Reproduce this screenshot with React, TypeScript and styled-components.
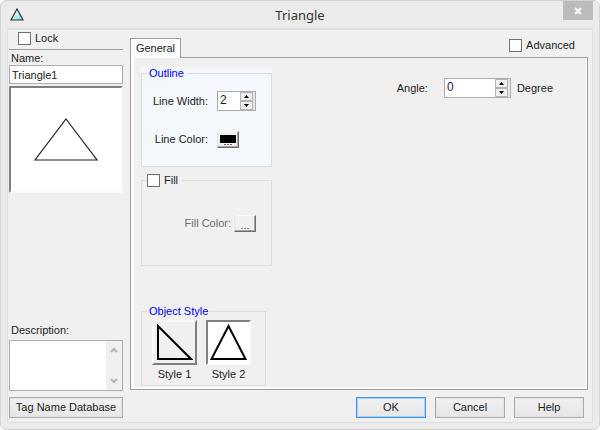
import React, { useState } from 'react';
import styled, { createGlobalStyle, css } from 'styled-components';

const GlobalStyle = createGlobalStyle`
  *, *::before, *::after { box-sizing: border-box; }
  body {
    margin: 0;
    background: #ffffff;
    color: #1c1c1c;
    font: 11px/13px "Liberation Sans", Arial, sans-serif;
  }
  button, input, textarea { font: inherit; color: inherit; margin: 0; }
`;

const Window = styled.div`
  display: flex;
  flex-direction: column;
  min-height: 100vh;
  padding: 0 6px 6px;
  background: #ebebeb;
  border: 1px solid #d4d4d4;
  border-radius: 6px;
`;

const TitleBar = styled.header`
  display: grid;
  grid-template-columns: 30px 1fr 30px;
  align-items: center;
  height: 27px;
`;

const Title = styled.h1`
  margin: 0;
  padding-top: 1px;
  text-align: center;
  font: 13px/18px "Noto Sans", "Open Sans", sans-serif;
  color: #333333;
`;

const CloseButton = styled.button`
  display: flex;
  align-items: center;
  justify-content: center;
  align-self: start;
  height: 19px;
  padding: 0;
  border: 0;
  background: #bcbcbc;
`;

const TitleIcon = styled.svg`
  display: block;
  margin-left: 3px;
`;

const Body = styled.main`
  display: flex;
  flex: 1;
  gap: 7px;
  padding: 2px 4px 4px 1px;
  background: #f0f0f0;
  border: 1px solid #dedede;
  border-top-width: 2px;
`;

const Sidebar = styled.section`
  display: flex;
  flex-direction: column;
  width: 114px;
  flex: none;
`;

const CheckLabel = styled.label`
  display: flex;
  align-items: center;
  gap: 4px;
  white-space: nowrap;
`;

const LockRow = styled.div`
  height: 18px;
  padding-left: 9px;
  border-bottom: 1px solid #a0a0a0;
`;

const CheckBox = styled.input.attrs({ type: 'checkbox' })`
  appearance: none;
  flex: none;
  width: 13px;
  height: 13px;
  border: 1px solid #707070;
  background: #ffffff;
  &:checked { box-shadow: inset 0 0 0 3px #ffffff; background: #202020; }
`;

const FieldLabel = styled.label`
  padding: 2px 0 0 2px;
`;

const TextInput = styled.input`
  width: 100%;
  height: 19px;
  padding: 0 2px;
  border: 1px solid #abadb3;
  background: #ffffff;
`;

const Preview = styled.div`
  display: flex;
  align-items: center;
  justify-content: center;
  height: 107px;
  margin-top: 2px;
  border: 2px solid;
  border-color: #808080 #f8f8f8 #f8f8f8 #808080;
  background: #ffffff;
`;

const Description = styled.div`
  display: flex;
  flex-direction: column;
  gap: 3px;
  margin-top: auto;
`;

const MemoBox = styled.div`
  display: flex;
  height: 51px;
  border: 1px solid #abadb3;
  background: #ffffff;
`;

const Memo = styled.textarea`
  flex: 1;
  min-width: 0;
  padding: 2px;
  border: 0;
  resize: none;
  overflow: hidden;
  background: transparent;
  outline: none;
`;

const ScrollBar = styled.div`
  display: flex;
  flex-direction: column;
  justify-content: space-between;
  width: 16px;
  padding: 1px 0;
  background: #f0f0f0;
`;

const ScrollButton = styled.button`
  display: flex;
  align-items: center;
  justify-content: center;
  height: 16px;
  padding: 0;
  border: 0;
  background: transparent;
`;

const PushButton = styled.button<{ $primary?: boolean }>`
  width: 70px;
  height: 21px;
  padding: 0;
  white-space: nowrap;
  border: 1px solid ${(p) => (p.$primary ? '#3c94ee' : '#acacac')};
  box-shadow: inset 0 0 0 1px ${(p) => (p.$primary ? '#a9d2fa' : '#e2e2e2')};
  background: linear-gradient(#f1f1f1, #e6e6e6);
`;

const DatabaseButton = styled(PushButton)`
  width: 100%;
  margin-top: 6px;
`;

const Content = styled.section`
  display: flex;
  flex-direction: column;
  flex: 1;
  min-width: 0;
`;

const TabHeader = styled.div`
  display: flex;
  align-items: flex-start;
  justify-content: space-between;
  height: 25px;
  padding: 6px 13px 0 0;
`;

const Tab = styled.button`
  position: relative;
  height: 20px;
  width: 51px;
  padding: 0;
  border: 1px solid #a0a0a0;
  border-bottom: 0;
  background: #fcfcfc;
`;

const HeaderCheck = styled(CheckLabel)`
  padding-top: 1px;
`;

const TabPanel = styled.div`
  display: flex;
  flex: 1;
  justify-content: space-between;
  padding: 9px 34px 3px 10px;
  border: 1px solid #a0a0a0;
  box-shadow: inset 3px 0 0 #fdfdfd, inset -1px -2px 0 #fdfdfd;
`;

const GroupColumn = styled.div`
  display: flex;
  flex-direction: column;
  gap: 7px;
  width: 131px;
`;

const Group = styled.div<{ $tinted?: boolean; $last?: boolean }>`
  display: grid;
  ${(p) => p.$tinted && css`background: #f4f7fc;`}
  ${(p) => p.$last && css`width: 125px; margin-top: auto;`}
`;

const FieldSet = styled.fieldset`
  min-width: 0;
  margin: 0;
  padding: 0;
  border: 1px solid #dcdcdc;
`;

const Legend = styled.legend<{ $plain?: boolean }>`
  margin-left: 5px;
  padding: 0 ${(p) => (p.$plain ? 4 : 2)}px;
  padding-left: ${(p) => (p.$plain ? 0 : 2)}px;
  color: ${(p) => (p.$plain ? 'inherit' : '#0000ff')};
`;

const OutlineFields = styled.div`
  display: grid;
  grid-template-columns: 66px auto;
  grid-auto-rows: 20px;
  justify-content: start;
  align-items: center;
  row-gap: 18px;
  column-gap: 9px;
  padding: 11px 0 17px;
  label { justify-self: end; white-space: nowrap; }
`;

const FillFields = styled.div`
  display: flex;
  align-items: center;
  gap: 3px;
  justify-content: flex-end;
  padding: 28px 15px 33px 0;
  color: #6d6d6d;
`;

const SpinBox = styled.div<{ $wide?: boolean }>`
  display: flex;
  width: ${(p) => (p.$wide ? 67 : 39)}px;
  height: 20px;
  border: 1px solid #abadb3;
  background: #ffffff;
`;

const SpinInput = styled.input.attrs({ type: 'number' })`
  appearance: textfield;
  flex: 1;
  min-width: 0;
  padding: 0 0 1px 2px;
  border: 0;
  outline: none;
  background: transparent;
  font-size: 12px;
  &::-webkit-inner-spin-button { display: none; }
`;

const SpinButtons = styled.div`
  display: grid;
  grid-template-rows: 1fr 1fr;
  width: 15px;
  padding: 0 2px 0 0;
  background: #e4e4e4;
`;

const SpinButton = styled.button`
  display: flex;
  align-items: center;
  justify-content: center;
  padding: 0;
  border: 1px solid #b4b4b4;
  background: #eeeeee;
`;

const ColorButton = styled.button`
  display: flex;
  flex-direction: column;
  align-items: center;
  justify-content: flex-end;
  gap: 1px;
  width: 22px;
  height: 17px;
  padding: 0 1px 2px;
  border: 1px solid;
  border-color: #fafafa #6c6c6c #6c6c6c #e4e4e4;
  box-shadow: inset -1px -1px 0 #a6a6a6;
  background: #f0f0f0;
`;

const Swatch = styled.span`
  width: 16px;
  height: 8px;
  background: #000000;
`;

const StyleList = styled.div`
  display: flex;
  gap: 9px;
  padding: 2px 0 4px 10px;
`;

const StyleItem = styled.label`
  display: grid;
  justify-items: center;
  gap: 3px;
`;

const StyleButton = styled.button<{ $active: boolean }>`
  display: flex;
  align-items: center;
  justify-content: center;
  width: 45px;
  height: 45px;
  padding: 0;
  border: 2px solid;
  border-color: ${(p) => (p.$active ? '#808080 #fafafa #fafafa #808080' : '#fafafa #808080 #808080 #fafafa')};
  background: ${(p) => (p.$active ? '#ffffff' : '#f0f0f0')};
`;

const AngleRow = styled.div`
  display: flex;
  align-items: center;
  align-self: flex-start;
  padding-top: 11px;
  white-space: nowrap;
`;

const AngleLabel = styled.label`
  padding-right: 16px;
`;

const AngleUnit = styled.span`
  padding-left: 6px;
`;

const Footer = styled.footer`
  display: flex;
  justify-content: flex-end;
  gap: 9px;
  padding: 7px 4px 0 0;
`;

const Arrow = ({ up }: { up?: boolean }) => (
  <svg width="5" height="3" viewBox="0 0 5 3" aria-hidden="true">
    <path d={up ? 'M0 3 2.500 0 5 3Z' : 'M0 0h5L2.500 3Z'} fill="#000" />
  </svg>
);

const Chevron = ({ up }: { up?: boolean }) => (
  <svg width="8" height="6" viewBox="0 0 8 6" aria-hidden="true">
    <path d={up ? 'M1 5 4 2l3 3' : 'M1 1l3 3 3-3'} fill="none" stroke="#b4b4b4" strokeWidth="2" />
  </svg>
);

const Dots = ({ color }: { color: string }) => (
  <svg width="8" height="1" viewBox="0 0 8 1" aria-hidden="true">
    <path d="M0 0h2v1H0zM3 0h2v1H3zM6 0h2v1H6z" fill={color} />
  </svg>
);

type SpinnerProps = {
  id: string;
  value: number;
  wide?: boolean;
  onChange: (value: number) => void;
};

const Spinner = ({ id, value, wide, onChange }: SpinnerProps) => (
  <SpinBox $wide={wide}>
    <SpinInput id={id} value={value} onChange={(e) => onChange(Number(e.target.value))} />
    <SpinButtons>
      <SpinButton type="button" aria-label="Increase" onClick={() => onChange(value + 1)}>
        <Arrow up />
      </SpinButton>
      <SpinButton type="button" aria-label="Decrease" onClick={() => onChange(value - 1)}>
        <Arrow />
      </SpinButton>
    </SpinButtons>
  </SpinBox>
);

export default function App() {
  const [name, setName] = useState('Triangle1');
  const [lineWidth, setLineWidth] = useState(2);
  const [angle, setAngle] = useState(0);
  const [shape, setShape] = useState(2);
  const [fill, setFill] = useState(false);

  return (
    <>
      <GlobalStyle />
      <Window>
        <TitleBar>
          <TitleIcon width="14" height="13" viewBox="0 0 14 13" aria-hidden="true">
            <defs>
              <linearGradient id="glass" x1="0" y1="0" x2="1" y2="1">
                <stop offset="0.300" stopColor="#e2fbfa" />
                <stop offset="1" stopColor="#6fdcd8" />
              </linearGradient>
            </defs>
            <path d="M7 1 13 12H1Z" fill="url(#glass)" stroke="#333" strokeWidth="1.200" />
          </TitleIcon>
          <Title>Triangle</Title>
          <CloseButton type="button" aria-label="Close">
            <svg width="8" height="8" viewBox="0 0 8 8" aria-hidden="true">
              <path d="M1 1l6 6M7 1 1 7" stroke="#fff" strokeWidth="1.800" />
            </svg>
          </CloseButton>
        </TitleBar>

        <Body>
          <Sidebar>
            <LockRow>
              <CheckLabel>
                <CheckBox />
                Lock
              </CheckLabel>
            </LockRow>
            <FieldLabel htmlFor="name">Name:</FieldLabel>
            <TextInput id="name" value={name} onChange={(e) => setName(e.target.value)} />
            <Preview>
              <svg width="64" height="43" viewBox="0 0 64 43" role="img" aria-label="Preview">
                <path d="M32 1 63 42H1Z" fill="none" stroke="#202020" strokeWidth="1.200" />
              </svg>
            </Preview>
            <Description>
              <FieldLabel htmlFor="description">Description:</FieldLabel>
              <MemoBox>
                <Memo id="description" />
                <ScrollBar>
                  <ScrollButton type="button" aria-label="Scroll up"><Chevron up /></ScrollButton>
                  <ScrollButton type="button" aria-label="Scroll down"><Chevron /></ScrollButton>
                </ScrollBar>
              </MemoBox>
            </Description>
            <DatabaseButton type="button">Tag Name Database</DatabaseButton>
          </Sidebar>

          <Content>
            <TabHeader>
              <Tab type="button" role="tab" aria-selected="true">General</Tab>
              <HeaderCheck>
                <CheckBox />
                Advanced
              </HeaderCheck>
            </TabHeader>
            <TabPanel role="tabpanel" aria-label="General">
              <GroupColumn>
                <Group $tinted>
                  <FieldSet>
                    <Legend>Outline</Legend>
                    <OutlineFields>
                      <label htmlFor="line-width">Line Width:</label>
                      <Spinner id="line-width" value={lineWidth} onChange={setLineWidth} />
                      <label htmlFor="line-color">Line Color:</label>
                      <ColorButton id="line-color" type="button">
                        <Swatch />
                        <Dots color="#7d5560" />
                      </ColorButton>
                    </OutlineFields>
                  </FieldSet>
                </Group>

                <Group>
                  <FieldSet>
                    <Legend $plain>
                      <CheckLabel>
                        <CheckBox checked={fill} onChange={(e) => setFill(e.target.checked)} />
                        Fill
                      </CheckLabel>
                    </Legend>
                    <FillFields>
                      <label htmlFor="fill-color">Fill Color:</label>
                      <ColorButton id="fill-color" type="button" disabled={!fill}>
                        <Dots color="#8a8a8a" />
                      </ColorButton>
                    </FillFields>
                  </FieldSet>
                </Group>

                <Group $last>
                  <FieldSet>
                    <Legend>Object Style</Legend>
                    <StyleList>
                      <StyleItem>
                        <StyleButton type="button" $active={shape === 1} onClick={() => setShape(1)}>
                          <svg width="37" height="37" viewBox="0 0 37 37" aria-hidden="true">
                            <path d="M2 2v33h33Z" fill="none" stroke="#000" strokeWidth="2" />
                          </svg>
                        </StyleButton>
                        Style 1
                      </StyleItem>
                      <StyleItem>
                        <StyleButton type="button" $active={shape === 2} onClick={() => setShape(2)}>
                          <svg width="37" height="37" viewBox="0 0 37 37" aria-hidden="true">
                            <path d="M18.500 2 35.500 35h-34Z" fill="none" stroke="#000" strokeWidth="2" />
                          </svg>
                        </StyleButton>
                        Style 2
                      </StyleItem>
                    </StyleList>
                  </FieldSet>
                </Group>
              </GroupColumn>

              <AngleRow>
                <AngleLabel htmlFor="angle">Angle:</AngleLabel>
                <Spinner id="angle" wide value={angle} onChange={setAngle} />
                <AngleUnit>Degree</AngleUnit>
              </AngleRow>
            </TabPanel>
            <Footer>
              <PushButton type="button" $primary>OK</PushButton>
              <PushButton type="button">Cancel</PushButton>
              <PushButton type="button">Help</PushButton>
            </Footer>
          </Content>
        </Body>
      </Window>
    </>
  );
}
